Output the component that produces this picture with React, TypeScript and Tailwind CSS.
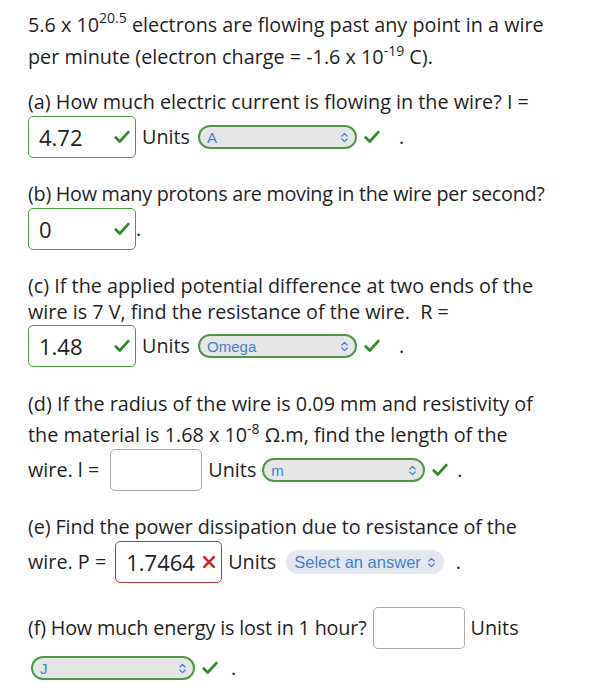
import React from 'react';

const font = { fontFamily: '"Open Sans", "Liberation Sans", sans-serif' };
const ui = { fontFamily: '"Liberation Sans", Arial, sans-serif' };

function Check({ className = '' }: { className?: string }) {
  return (
    <svg viewBox="0 0 20 20" className={`w-[18px] h-[18px] ${className}`} fill="none">
      <path d="M3 10.5l4.5 4.5L17 4.5" stroke="#2f8a2f" strokeWidth="3" strokeLinecap="round" strokeLinejoin="round" />
    </svg>
  );
}

function Cross() {
  return (
    <svg viewBox="0 0 20 20" className="w-[16px] h-[16px]" fill="none">
      <path d="M4 4l12 12M16 4L4 16" stroke="#c62828" strokeWidth="3.2" strokeLinecap="round" />
    </svg>
  );
}

function Chevrons() {
  return (
    <svg viewBox="0 0 12 16" className="w-[9px] h-[13px]" fill="none">
      <path d="M2.5 6L6 2.5 9.5 6M2.5 10L6 13.5 9.5 10" stroke="#3f7fd0" strokeWidth="1.6" strokeLinecap="round" strokeLinejoin="round" />
    </svg>
  );
}

function Answer({ value, status, w = 'w-[108px]' }: { value?: string; status?: 'ok' | 'bad'; w?: string }) {
  const border = status === 'ok' ? 'border-[#4c9a44]' : status === 'bad' ? 'border-[#b23a3a]' : 'border-[#a9a9a9]';
  return (
    <span className={`inline-flex items-center justify-between h-[42px] ${w} border ${border} rounded-[5px] pl-[10px] pr-[4px] bg-white`}>
      <span className="text-[22px] text-[#222]">{value}</span>
      {status === 'ok' && <Check />}
      {status === 'bad' && <Cross />}
    </span>
  );
}

function Pick({ label, w }: { label: string; w: string }) {
  return (
    <span className={`inline-flex items-center justify-between h-[24px] ${w} border-2 border-[#4c9a44] rounded-full bg-[#e6e6e6] pl-[7px] pr-[6px]`}>
      <span className="text-[15px] text-[#3f7fd0]" style={ui}>{label}</span>
      <Chevrons />
    </span>
  );
}

export default function App() {
  return (
    <div className="bg-white w-[591px] h-[700px] pl-[28px] pt-[9px] text-[19.8px] text-[#1f1f1f] leading-none" style={font}>
      <div className="h-[32px] flex items-center">
        <span>5.6 x 10<sup className="text-[14px] relative -top-[9px]">20.5</sup> electrons are flowing past any point in a wire</span>
      </div>
      <div className="h-[32px] flex items-center">
        <span>per minute (electron charge = -1.6 x 10<sup className="text-[14px] relative -top-[8px]">-19</sup> C).</span>
      </div>

      <div className="mt-[15px] h-[28px] flex items-center">(a) How much electric current is flowing in the wire? I =</div>
      <div className="flex items-center gap-[6px] h-[42px]">
        <Answer value="4.72" status="ok" />
        <span>Units</span>
        <span className="ml-[2px]"><Pick label="A" w="w-[159px]" /></span>
        <Check />
        <span className="ml-[12px]">.</span>
      </div>

      <div className="mt-[22px] h-[28px] flex items-center tracking-[-0.28px]">(b) How many protons are moving in the wire per second?</div>
      <div className="flex items-center h-[42px]">
        <Answer value="0" status="ok" />
        <span>.</span>
      </div>

      <div className="mt-[23px] h-[26px] flex items-center">(c) If the applied potential difference at two ends of the</div>
      <div className="h-[26px] flex items-center">wire is 7 V, find the resistance of the wire.&nbsp; R =</div>
      <div className="flex items-center gap-[6px] h-[42px]">
        <Answer value="1.48" status="ok" />
        <span>Units</span>
        <span className="ml-[2px]"><Pick label="Omega" w="w-[159px]" /></span>
        <Check />
        <span className="ml-[12px]">.</span>
      </div>

      <div className="mt-[21px] h-[32px] flex items-center">(d) If the radius of the wire is 0.09 mm and resistivity of</div>
      <div className="h-[29px] flex items-center">
        <span>the material is 1.68 x 10<sup className="text-[14px] relative -top-[8px]">-8</sup> Ω.m, find the length of the</span>
      </div>
      <div className="flex items-center gap-[6px] h-[42px]">
        <span className="mr-[5px]">wire. l =</span>
        <Answer w="w-[92px]" />
        <span>Units</span>
        <span className="ml-[0px]"><Pick label="m" w="w-[163px]" /></span>
        <Check />
        <span className="ml-[2px]">.</span>
      </div>

      <div className="mt-[22px] h-[28px] flex items-center tracking-[-0.1px]">(e) Find the power dissipation due to resistance of the</div>
      <div className="flex items-center gap-[6px] h-[42px]">
        <span className="mr-[3px]">wire. P =</span>
        <Answer value="1.7464" status="bad" w="w-[107px]" />
        <span>Units</span>
        <span className="ml-[4px] inline-flex items-center gap-[6px] h-[24px] rounded-full bg-[#e4e8ee] px-[8px] text-[16.5px] text-[#3f7fd0]" style={ui}>
          Select an answer <Chevrons />
        </span>
        <span className="ml-[6px]">.</span>
      </div>

      <div className="mt-[24px] flex items-center gap-[6px] h-[42px]">
        <span className="tracking-[-0.18px]">(f) How much energy is lost in 1 hour?</span>
        <Answer w="w-[92px]" />
        <span>Units</span>
      </div>
      <div className="mt-[6px] flex items-center gap-[6px] h-[26px] pl-[3px]">
        <Pick label="J" w="w-[164px]" />
        <Check />
        <span className="ml-[6px]">.</span>
      </div>
    </div>
  );
}
